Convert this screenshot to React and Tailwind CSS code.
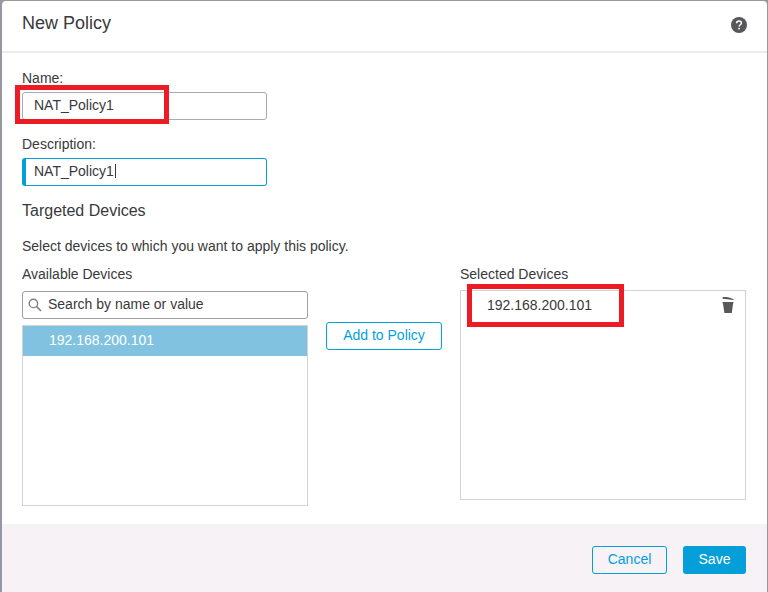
import React, { useState } from "react";

const fieldClass =
  "block h-7 w-full rounded-[3px] border bg-white pb-0.5 text-sm text-[#39393b] outline-none";

function HelpIcon() {
  return (
    <svg viewBox="0 0 16 16" className="size-4" aria-hidden="true">
      <circle cx="8" cy="8" r="8" fill="#58585b" />
      <path
        d="M5.6 6.3C5.6 4.8 6.6 3.9 8 3.9s2.4.9 2.4 2.1c0 1.8-2.3 1.7-2.3 3.6"
        fill="none"
        stroke="#fff"
        strokeWidth="1.5"
      />
      <rect x="7.3" y="10.8" width="1.6" height="1.6" fill="#fff" />
    </svg>
  );
}

function SearchIcon() {
  return (
    <svg viewBox="0 0 14 14" className="size-3.5" fill="none" stroke="#7f7f86" aria-hidden="true">
      <circle cx="5.4" cy="5.4" r="4.2" strokeWidth="1.4" />
      <path d="M8.6 8.6l4.4 4.4" strokeWidth="1.6" />
    </svg>
  );
}

function TrashIcon() {
  return (
    <svg viewBox="0 0 12 16" className="h-4 w-3" fill="#58585b" aria-hidden="true">
      <path d="M.6 0L4.4.1 8 .8l3.6 1.4v.9L.6 1.7z" />
      <path d="M.5 5h11v1.2h-.4L9.8 16H2.4L.9 6.2H.5z" />
    </svg>
  );
}

function Highlight({ className }) {
  return (
    <span
      aria-hidden="true"
      className={`pointer-events-none absolute border-[5px] border-[#ed1c24] ${className}`}
    />
  );
}

export default function App() {
  const [name, setName] = useState("NAT_Policy1");
  const [description, setDescription] = useState("NAT_Policy1");
  const [query, setQuery] = useState("");

  return (
    <div className="flex min-h-screen flex-col bg-[#97979f] pt-px pr-px pl-0.5 font-['Liberation_Sans',Arial,sans-serif] text-sm leading-4 text-[#39393b]">
      <div className="flex flex-1 flex-col rounded-t-[4px] bg-white" role="dialog" aria-labelledby="title">
        <header className="flex items-center justify-between border-b-2 border-[#ececee] px-5 pt-3 pb-[18px]">
          <h1 id="title" className="text-lg leading-5">New Policy</h1>
          <button type="button" aria-label="Help" className="mt-1">
            <HelpIcon />
          </button>
        </header>

        <main className="flex-1 pt-[17px] pr-[21px] pb-[18px] pl-5">
          <div className="w-[245px]">
            <label htmlFor="name" className="block pb-1.5">Name:</label>
            <div className="relative">
              <input
                id="name"
                value={name}
                onChange={(e) => setName(e.target.value)}
                className={`${fieldClass} border-[#a9a9af] px-[11px]`}
              />
              <Highlight className="-top-[7px] -left-[7px] h-[39px] w-[154px]" />
            </div>
            <label htmlFor="description" className="block pt-4 pb-1.5">Description:</label>
            <div className="relative">
              <input
                id="description"
                value={description}
                onChange={(e) => setDescription(e.target.value)}
                className={`${fieldClass} border-l-4 border-[#049fd9] px-2`}
              />
              <span className="pointer-events-none absolute top-1.5 left-[93px] h-3.5 w-px bg-[#39393b]" />
            </div>
          </div>

          <h2 className="pt-[15px] text-base leading-5">Targeted Devices</h2>
          <p className="pt-[17px] pb-3">Select devices to which you want to apply this policy.</p>

          <div className="flex gap-[18px]">
            <section className="min-w-0 flex-1">
              <label htmlFor="search" className="block pb-[9px]">Available Devices</label>
              <div className="relative">
                <input
                  id="search"
                  value={query}
                  onChange={(e) => setQuery(e.target.value)}
                  placeholder="Search by name or value"
                  className={`${fieldClass} border-[#9e9ea4] pr-2 pl-[25px] placeholder:text-[#39393b]`}
                />
                <span className="pointer-events-none absolute top-[7px] left-1.5">
                  <SearchIcon />
                </span>
              </div>
              <ul className="mt-1.5 h-[181px] border border-[#d3d3d6]">
                <li className="h-[30px] bg-[#80c2df] pl-[26px] leading-[28px] text-white">
                  192.168.200.101
                </li>
              </ul>
            </section>

            <button
              type="button"
              className="mt-14 h-7 w-[116px] shrink-0 rounded-[3px] border border-[#049fd9] bg-white pb-0.5 text-[#049fd9]"
            >
              Add to Policy
            </button>

            <section className="min-w-0 flex-1">
              <h3 className="pb-2">Selected Devices</h3>
              <div className="relative h-[210px] border border-[#d3d3d6]">
                <ul>
                  <li className="flex items-center justify-between pt-1.5 pr-[11px] pl-[26px]">
                    <span>192.168.200.101</span>
                    <button type="button" aria-label="Remove 192.168.200.101">
                      <TrashIcon />
                    </button>
                  </li>
                </ul>
                <Highlight className="-top-[7px] left-1.5 h-[43px] w-[157px]" />
              </div>
            </section>
          </div>
        </main>

        <footer className="flex justify-end gap-4 bg-[#f6f2f6] pt-[22px] pr-[21px] pb-[18px] pl-5">
          <button
            type="button"
            className="h-7 w-[75px] rounded-[3px] border border-[#049fd9] pb-0.5 text-[#049fd9]"
          >
            Cancel
          </button>
          <button
            type="button"
            className="h-7 w-[63px] rounded-[3px] bg-[#049fd9] pb-0.5 text-white"
          >
            Save
          </button>
        </footer>
      </div>
    </div>
  );
}
